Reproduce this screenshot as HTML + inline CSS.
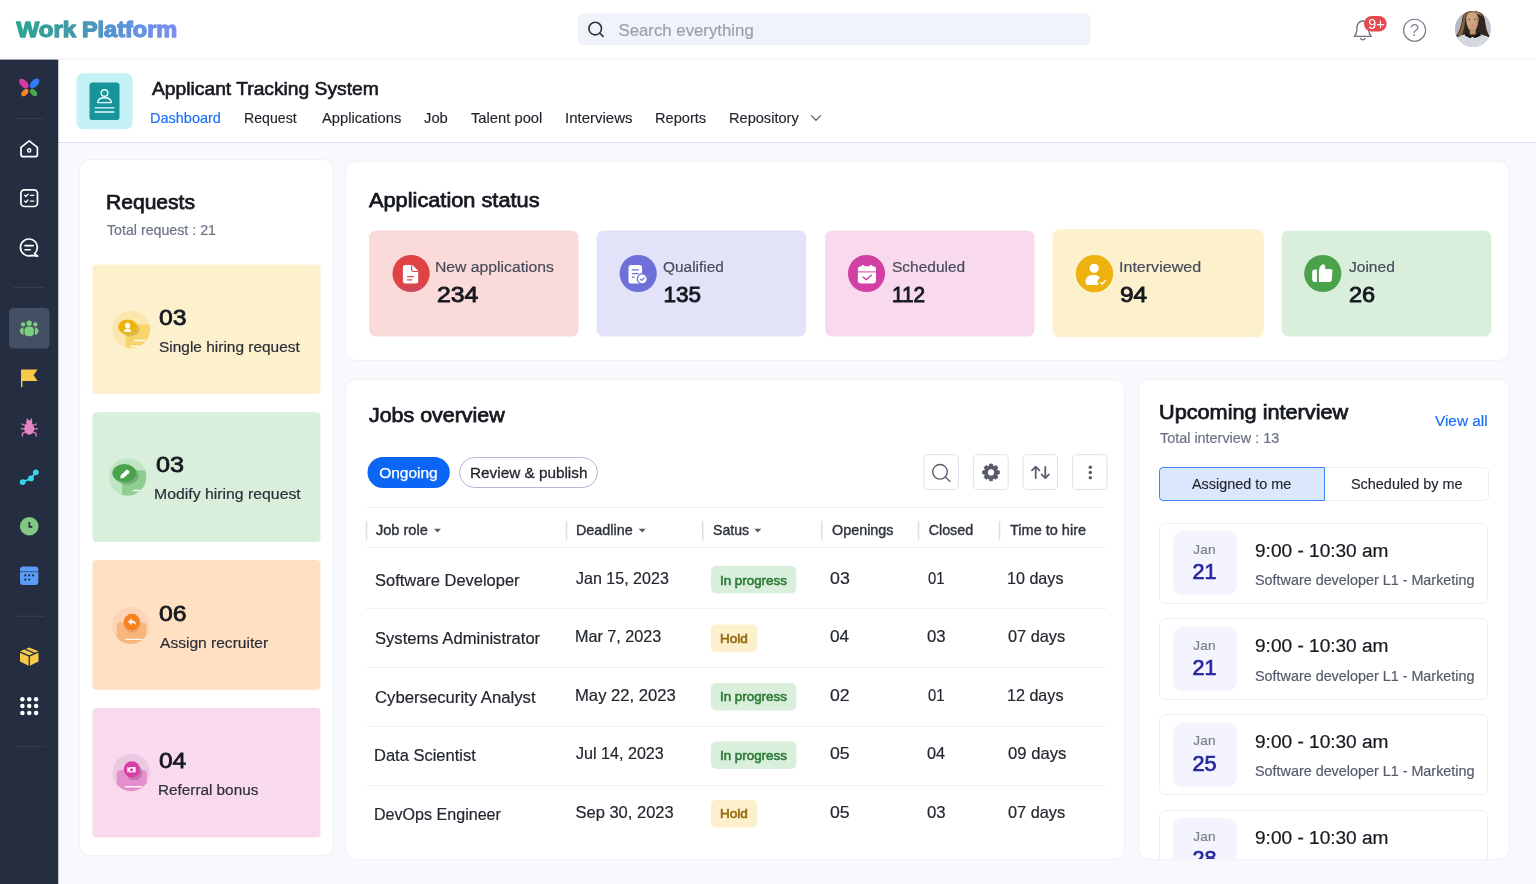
<!DOCTYPE html>
<html lang="en">
<head>
<meta charset="utf-8">
<title>Applicant Tracking System</title>
<style>
*{box-sizing:border-box;margin:0;padding:0}
html,body{width:1536px;height:884px;overflow:hidden}
body{font-family:"Liberation Sans",sans-serif;background:#f8f9fd;color:#15181f;position:relative}
.t{position:absolute;white-space:nowrap;line-height:1;z-index:5;transform-origin:0 50%}
#topbar{position:absolute;left:0;top:0;width:1536px;height:60px;background:#fff}
#side{position:absolute;left:0;top:60px;width:58px;height:824px;background:#252d40}
#apphead{position:absolute;left:58px;top:59px;width:1478px;height:84px;background:#fff;border-bottom:1px solid #d5dff2}
.card{position:absolute;background:#fff;border-radius:10px;box-shadow:0 0 0 1px #f1f2f7}
.hl{position:absolute;height:1px;background:#f1f2f7}
.ic{position:absolute;left:20.2px;width:329.3px;height:81.3px;border:1px solid #eff0f6;border-radius:6px;background:#fff}
.db{position:absolute;left:13.3px;top:7.5px;width:64px;height:64px;border-radius:9px;background:#f3f4fd;text-align:center;padding-right:1.8px}
.db i{display:block;font-style:normal;font-size:13.6px;color:#7a8090;line-height:1;padding-top:11.8px;letter-spacing:.2px;-webkit-text-stroke:.2px #7a8090}
.db b{display:block;font-weight:400;-webkit-text-stroke:.7px #24279b;font-size:21.6px;color:#24279b;line-height:1;padding-top:4.6px;transform:scaleX(1.0)}
#tl{position:absolute;left:0;top:0;width:1536px;height:884px;z-index:5;will-change:transform}
svg{position:absolute;left:0;top:0;overflow:visible;will-change:transform}
.gs{will-change:transform}
</style>
</head>
<body>
<div id="topbar"></div>
<div id="side"></div>
<div id="apphead"></div>

<!-- Requests card -->
<div class="card" style="left:80px;top:160px;width:253px;height:695px"></div>

<!-- Application status card -->
<div class="card" style="left:346px;top:162px;width:1163px;height:197.5px"></div>

<!-- Jobs overview card -->
<div class="card" style="left:346px;top:380px;width:777.5px;height:479px"></div>
<div class="hl" style="left:364.5px;top:507px;width:739px"></div>
<div class="hl" style="left:364.5px;top:547px;width:742px"></div>
<div class="hl" style="left:364.5px;top:608px;width:742px"></div>
<div class="hl" style="left:364.5px;top:666.6px;width:742px"></div>
<div class="hl" style="left:364.5px;top:725.6px;width:742px"></div>
<div class="hl" style="left:364.5px;top:785px;width:742px"></div>

<!-- Upcoming interview card -->
<div class="card gs" style="left:1139px;top:380px;width:370px;height:479px;overflow:hidden">
  <div style="position:absolute;left:185px;top:87px;width:164.5px;height:34px;border:1px solid #eceef5;border-left:none;border-radius:0 5px 5px 0"></div>
  <div style="position:absolute;left:20px;top:87px;width:165.5px;height:34px;border:1px solid #3f86f7;border-radius:4px 0 0 4px;background:#dbe7fc"></div>
  <div class="ic" style="top:142.75px"><div class="db"><i>Jan</i><b>21</b></div></div>
  <div class="ic" style="top:238.4px"><div class="db"><i>Jan</i><b>21</b></div></div>
  <div class="ic" style="top:334.1px"><div class="db"><i>Jan</i><b>25</b></div></div>
  <div class="ic" style="top:429.75px"><div class="db"><i>Jan</i><b>28</b></div></div>
</div>

<!-- icon layer (page coordinates) -->
<svg width="1536" height="884" viewBox="0 0 1536 884" style="z-index:4">
<defs>
  <linearGradient id="bg" x1="16" y1="0" x2="178" y2="0" gradientUnits="userSpaceOnUse">
    <stop offset="0" stop-color="#2aa590"/><stop offset=".38" stop-color="#4598ad"/><stop offset=".62" stop-color="#5594d6"/><stop offset="1" stop-color="#7e8df2"/>
  </linearGradient>
  <linearGradient id="rg" x1="0" y1="254.9" x2="0" y2="292.1" gradientUnits="userSpaceOnUse"><stop offset="0" stop-color="#e04343"/><stop offset=".74" stop-color="#e04343"/><stop offset=".9" stop-color="#d0495a"/><stop offset="1" stop-color="#c94c5c"/></linearGradient>
  <clipPath id="c1"><circle cx="131.2" cy="329.5" r="18.7"/></clipPath>
  <clipPath id="c2"><circle cx="127.6" cy="476.9" r="18.7"/></clipPath>
  <clipPath id="c3"><circle cx="130.75" cy="625.5" r="18.5"/></clipPath>
  <clipPath id="c4"><circle cx="131.2" cy="772.6" r="18.6"/></clipPath>
  <clipPath id="av"><circle cx="1473" cy="29" r="18"/></clipPath>
</defs>

<!-- colored cards (antialiased at half-pixel edges like the reference) -->
<g>
  <rect x="0" y="58.4" width="1536" height="1.3" fill="#f1f3f8"/>
  <rect x="0" y="59.6" width="58.25" height="825" fill="#252d40"/>
  <rect x="578" y="13.5" width="512.6" height="31.5" rx="4.5" fill="#f0f3f9"/>
  <rect x="92.5" y="264.5" width="228" height="129.5" rx="4" fill="#fdf0cd"/>
  <rect x="92.5" y="412.3" width="228" height="129.6" rx="4" fill="#d9efdb"/>
  <rect x="92.5" y="560" width="228" height="129.7" rx="4" fill="#ffe0c2"/>
  <rect x="92.5" y="708" width="228" height="129.5" rx="4" fill="#f8d9ee"/>
  <rect x="369" y="230.5" width="209.5" height="106" rx="7" fill="#fadbda"/>
  <rect x="596.6" y="230.5" width="209.6" height="106" rx="7" fill="#e2e2f8"/>
  <rect x="825" y="230.5" width="209.5" height="106" rx="7" fill="#f8d9ee"/>
  <rect x="1052.5" y="229.3" width="211.2" height="108" rx="7.5" fill="#fdf0cd"/>
  <rect x="1281.6" y="230.5" width="209.6" height="106" rx="7" fill="#d9efdb"/>
  <rect x="711" y="566" width="85.3" height="27.5" rx="5" fill="#d9efdb"/>
  <rect x="711" y="624.5" width="46.3" height="27.5" rx="5" fill="#fdf0cd"/>
  <rect x="711" y="683" width="85.3" height="27.5" rx="5" fill="#d9efdb"/>
  <rect x="711" y="741.5" width="85.3" height="27.5" rx="5" fill="#d9efdb"/>
  <rect x="711" y="800" width="46.3" height="27.5" rx="5" fill="#fdf0cd"/>
</g>

<!-- brand -->
<g font-family="Liberation Sans, sans-serif" font-weight="700" font-size="21.9" fill="url(#bg)" stroke="url(#bg)" stroke-width="1.3" stroke-linejoin="round">
  <text x="16.6" y="36.7" textLength="59.6" lengthAdjust="spacingAndGlyphs">Work</text>
  <text x="81.9" y="36.7" textLength="95.4" lengthAdjust="spacingAndGlyphs">Platform</text>
</g>

<!-- top search icon -->
<g fill="none" stroke="#2b303b" stroke-width="1.6" stroke-linecap="round">
  <circle cx="595.2" cy="28.6" r="6.3"/><path d="M599.9 33.3 L603 36.4"/>
</g>
<!-- bell -->
<g fill="none" stroke="#6a7283" stroke-width="1.3" stroke-linecap="round" stroke-linejoin="round">
  <path d="M1354.4 36.3 H1371.2 C1369.6 34.6 1368.7 32.6 1368.7 30 V27.6 C1368.7 24 1366.2 21 1362.8 21 C1359.4 21 1356.9 24 1356.9 27.6 V30 C1356.9 32.6 1356 34.6 1354.4 36.3 Z"/>
  <path d="M1360.6 38.3 a2.3 2.3 0 0 0 4.4 0"/>
</g>
<rect x="1364" y="16" width="22.6" height="15.6" rx="7.8" fill="#e5484d"/>
<text x="1368.2" y="28.6" font-family="Liberation Sans, sans-serif" font-size="14.2" fill="#fff" textLength="16.4" lengthAdjust="spacingAndGlyphs">9+</text>
<!-- help -->
<circle cx="1414.6" cy="30.2" r="11" fill="none" stroke="#737a88" stroke-width="1.15"/>
<text x="1414.6" y="36.3" font-family="Liberation Sans, sans-serif" font-size="17" fill="#838a97" text-anchor="middle">?</text>
<!-- avatar -->
<g clip-path="url(#av)">
  <rect x="1455" y="11" width="36" height="36" fill="#c3c5cf"/>
  <rect x="1455" y="11" width="12" height="26" fill="#aeb0ba" opacity=".6"/>
  <path d="M1473 10.4 C1466.4 10.4 1463 14 1462.2 18.6 C1461.4 24.6 1460.6 30 1455.6 36.6 L1467 37.4 L1479 37.4 L1490 37.2 C1486.4 31.6 1485.8 26 1485 20.4 C1484.2 14.4 1479.8 10.4 1473 10.4 Z" fill="#33261f"/>
  <path d="M1472 10.6 C1466.6 10.8 1463.6 14.2 1463 18.6 C1462.2 24.6 1461.4 29.6 1457 35.6 L1461.6 36 C1464 31 1464.6 25 1465.2 19.4 C1465.6 15 1468 12 1472 10.6 Z" fill="#86633f"/>
  <path d="M1466.4 15 C1467.8 12.2 1470.4 11 1473.6 11 C1477.6 11 1480.8 12.8 1482.4 16.4 C1479.2 14.2 1476 13.6 1472.6 13.6 C1470 13.6 1468 14 1466.4 15 Z" fill="#a27f57"/>
  <path d="M1466.3 17.4 C1466.7 14.2 1469.4 12.8 1472.3 12.8 C1475.7 12.8 1478.3 14.6 1478.5 18.6 C1478.7 23.2 1477.5 27.4 1475.3 30.2 C1473.9 32 1471.5 32 1470.1 30.4 C1467.3 27.4 1465.8 22.2 1466.3 17.4 Z" fill="#cda681"/>
  <path d="M1476 14.6 C1478 15.6 1478.7 17.4 1478.5 19.6 C1478.4 23.2 1477.5 27.4 1475.3 30.2 C1476.4 26 1477 20 1476 14.6 Z" fill="#a98363" opacity=".7"/>
  <rect x="1469.8" y="28.8" width="5.8" height="5.6" fill="#bf9873"/>
  <circle cx="1469.3" cy="19.5" r=".8" fill="#4b4a55"/><circle cx="1475" cy="19.5" r=".8" fill="#4b4a55"/>
  <path d="M1470.9 25.2 Q1472.3 26.3 1473.8 25.2 Q1472.4 24.5 1470.9 25.2 Z" fill="#e2455f"/>
  <path d="M1455 47 V38.6 C1461 35.4 1465 34.2 1468 33.8 L1472.8 37.4 L1477.6 33.8 C1481 34.2 1486 35.6 1491 38.6 V47 Z" fill="#d6d8e0"/>
  <path d="M1466 32 L1472.7 36.8 L1479.6 32 L1481 35.4 L1474.8 38.2 L1472.7 36.2 L1470.4 38.2 L1464.8 35.4 Z" fill="#15151a"/>
</g>

<!-- app icon -->
<rect x="76.5" y="73.2" width="56" height="56" rx="7" fill="#c3f1f5"/>
<rect x="89.5" y="82.5" width="30" height="37.6" rx="3.2" fill="#17959b"/>
<g fill="none" stroke="#eafcfd" stroke-width="1.4" stroke-linecap="round" stroke-linejoin="round">
  <circle cx="104.5" cy="93" r="3.3"/>
  <path d="M97.6 102.6 C98 99.2 100.6 97.8 104.5 97.8 C108.4 97.8 111 99.2 111.4 102.6 Z"/>
  <path d="M95.2 107.9 H113.8 M95.2 112 H113.8"/>
</g>
<!-- nav chevron -->
<path d="M811.5 115.6 L816 120.4 L820.5 115.6" fill="none" stroke="#5a6070" stroke-width="1.3" stroke-linecap="round" stroke-linejoin="round"/>

<!-- ===== sidebar ===== -->
<g>
  <ellipse cx="23.9" cy="83.6" rx="5.9" ry="3.4" transform="rotate(46 23.9 83.6)" fill="#d63aa9"/>
  <ellipse cx="34.6" cy="83.4" rx="5.9" ry="3.4" transform="rotate(-46 34.6 83.4)" fill="#2f7af5"/>
  <ellipse cx="24.8" cy="92.6" rx="4.3" ry="2.6" transform="rotate(-46 24.8 92.6)" fill="#f08a24"/>
  <ellipse cx="33.6" cy="92.6" rx="4.3" ry="2.6" transform="rotate(46 33.6 92.6)" fill="#4ca84e"/>
</g>
<g stroke="#3a4358" stroke-width="1">
  <path d="M14 118.5 H45" stroke="#333c50"/>
  <path d="M13.5 287.7 H44.5"/>
  <path d="M14 616.2 H45"/>
  <path d="M14 746.5 H45" stroke="#333c50"/>
</g>
<g fill="none" stroke="#fff" stroke-width="1.7" stroke-linecap="round" stroke-linejoin="round">
  <!-- home -->
  <path d="M21 147.4 L29.2 140.8 L37.4 147.4 V154.4 a2.3 2.3 0 0 1 -2.3 2.3 H23.3 a2.3 2.3 0 0 1 -2.3 -2.3 Z"/>
  <circle cx="29.2" cy="150.4" r="1.6" stroke-width="1.4"/>
  <!-- checklist -->
  <rect x="20.9" y="189.9" width="16.6" height="16.6" rx="3.6"/>
  <g stroke-width="1.3"><path d="M24.7 195.3 l1.2 1.2 l2.2 -2.4 M30.4 195.3 H33.8 M24.7 201.1 l1.2 1.2 l2.2 -2.4 M30.4 201.1 H33.8"/></g>
  <!-- chat -->
  <path d="M34.6 253.6 A8.4 8.4 0 1 0 31.6 255.4 L37.6 256.2 Z"/>
  <g stroke-width="1.6"><path d="M25 245.6 H33.2 M25 249.7 H30.2"/></g>
</g>
<rect x="9" y="308" width="40.5" height="40.5" rx="4.5" fill="#454f63"/>
<!-- people -->
<g fill="#7ccf7c">
  <circle cx="29.2" cy="323.2" r="2.65"/><rect x="24.5" y="326.5" width="9.4" height="9.8" rx="3.8"/>
  <circle cx="23.1" cy="324.4" r="2.15"/><path d="M23.5 327.4 V335 C21.4 334.6 19.9 333 19.9 330.6 C19.9 328.6 21.4 327.3 23.5 327.4 Z"/>
  <circle cx="35.3" cy="324.4" r="2.15"/><path d="M34.9 327.4 V335 C37 334.6 38.5 333 38.5 330.6 C38.5 328.6 37 327.3 34.9 327.4 Z"/>
</g>
<!-- flag -->
<path d="M21 369.4 H37.6 L33.6 375.2 L37.6 381 H22.4 V387 H21 Z" fill="#f7c948"/>
<!-- bug -->
<g fill="#e884c3" stroke="#e884c3" stroke-width="1.25" stroke-linecap="round" stroke-linejoin="round">
  <ellipse cx="29.25" cy="428.6" rx="5" ry="6.2" stroke="none"/>
  <ellipse cx="29.25" cy="422.4" rx="3" ry="2.4" stroke="none"/>
  <path d="M27.2 421 V418.8 M31.3 421 V418.8 M24.6 425.2 L22 424 M33.9 425.2 L36.5 424 M24.4 428.8 H21.3 M34.1 428.8 H37.2 M24.8 432.2 L22.4 433.4 V436 M33.7 432.2 L36.1 433.4 V436" fill="none"/>
</g>
<!-- nodes -->
<g fill="#36d6ea"><path d="M22.6 482 L31 478.4 L35.8 472.3" fill="none" stroke="#36d6ea" stroke-width="1.8"/>
  <circle cx="22.7" cy="482.1" r="2.9"/><circle cx="31" cy="478.4" r="2.9"/><circle cx="35.8" cy="472.3" r="2.9"/></g>
<!-- clock -->
<circle cx="29.25" cy="526.25" r="9.3" fill="#83c785"/>
<path d="M29.4 522 V526.9 H32.4" fill="none" stroke="#252d40" stroke-width="1.7"/>
<!-- calendar -->
<rect x="20" y="566.6" width="18.3" height="18.4" rx="3" fill="#5b9cf8"/>
<path d="M20 571.7 H38.3" stroke="#252d40" stroke-width=".9" stroke-dasharray="1.2 .6"/>
<g fill="#252d40"><circle cx="25.3" cy="575.4" r="1.15"/><circle cx="29.2" cy="575.4" r="1.15"/><circle cx="33.1" cy="575.4" r="1.15"/><circle cx="25.3" cy="579.6" r="1.15"/><circle cx="29.2" cy="579.6" r="1.15"/></g>
<!-- box -->
<g fill="#f7c948">
  <path d="M29.25 647.4 L38.5 651.2 L29.25 655.2 L20 651.2 Z"/>
  <path d="M20 652.8 L28.6 656.5 V665.8 L20 661.6 Z"/>
  <path d="M38.5 652.8 L29.9 656.5 V665.8 L38.5 661.6 Z"/>
  <path d="M24.2 649.4 L33.6 653.4 L35 652.8 L25.6 648.8 Z" fill="#252d40"/>
</g>
<!-- grid -->
<g fill="#fff">
  <circle cx="22.4" cy="699.2" r="2.25"/><circle cx="29.25" cy="699.2" r="2.25"/><circle cx="36.1" cy="699.2" r="2.25"/>
  <circle cx="22.4" cy="706.1" r="2.25"/><circle cx="29.25" cy="706.1" r="2.25"/><circle cx="36.1" cy="706.1" r="2.25"/>
  <circle cx="22.4" cy="713" r="2.25"/><circle cx="29.25" cy="713" r="2.25"/><circle cx="36.1" cy="713" r="2.25"/>
</g>

<!-- ===== request icons ===== -->
<circle cx="131.2" cy="329.5" r="18.7" fill="#fbe7ab"/>
<g clip-path="url(#c1)">
  <rect x="125.6" y="324.5" width="30" height="30" fill="#f7d56c"/>
  <path d="M134.4 340.6 H145.6 M130.3 346.2 H139.7" stroke="#fffaf0" stroke-width="1.5"/>
  <ellipse cx="129.9" cy="329.2" rx="9.6" ry="7.3" fill="#b08a20" opacity=".35"/>
</g>
<ellipse cx="127.6" cy="326.9" rx="9.6" ry="7.3" fill="#edb30f"/>
<circle cx="127.6" cy="325.4" r="2.6" fill="#fff"/>
<path d="M124 332 c.2-2.4 1.6-3.5 3.6-3.5 s3.4 1.1 3.6 3.5 Z" fill="#fff"/>

<circle cx="127.6" cy="476.9" r="18.7" fill="#c1e4c2"/>
<g clip-path="url(#c2)">
  <rect x="121.9" y="470.3" width="30" height="30" fill="#8fce90"/>
  <path d="M132.8 490.5 H140.4" stroke="#f4fbf4" stroke-width="1.4"/>
  <ellipse cx="126.8" cy="475.6" rx="11.9" ry="9" fill="#2d6e30" opacity=".3"/>
</g>
<ellipse cx="124.3" cy="473.1" rx="11.9" ry="9" fill="#49a34a"/>
<path d="M120.2 478.5 L120.9 475.2 L125.9 470.2 a1.7 1.7 0 0 1 2.4 0 l.6 .6 a1.7 1.7 0 0 1 0 2.4 L123.6 477.9 Z" fill="#fff"/>

<circle cx="130.75" cy="625.5" r="18.5" fill="#fcd5b8"/>
<g clip-path="url(#c3)">
  <rect x="116.8" y="622.6" width="29.7" height="26" rx="3.5" fill="#f8b57c"/>
  <path d="M125 639.4 H143.2" stroke="#fff6ee" stroke-width="1.3"/>
  <circle cx="132" cy="624.6" r="8.2" fill="#d9772a" opacity=".28"/>
</g>
<circle cx="131.9" cy="622" r="8.2" fill="#f5821f"/>
<path d="M127.9 621.7 L131.7 618.1 V620.3 C134.7 620.5 136.1 622.6 136.2 625.6 C135 623.8 133.7 623.1 131.7 623.1 V625.2 Z" fill="#fdf3ee"/>

<circle cx="131.2" cy="772.6" r="18.6" fill="#ebc8e2"/>
<g clip-path="url(#c4)">
  <rect x="116.8" y="770.2" width="30" height="26" rx="3.5" fill="#e48fcb"/>
  <path d="M125 786.7 H142.6" stroke="#fff2fa" stroke-width="1.4"/>
  <circle cx="134.2" cy="772.2" r="8.1" fill="#8a3a78" opacity=".35"/>
</g>
<circle cx="131.9" cy="769.35" r="8.1" fill="#d93da6"/>
<rect x="127.2" y="767" width="8.5" height="5.4" fill="#fbeaf6"/>
<circle cx="131.5" cy="769.7" r="1.5" fill="#d93da6"/>
<path d="M128.4 767 v1 M128.4 771.4 v1" stroke="#d93da6" stroke-width=".8"/>

<!-- ===== status icons ===== -->
<circle cx="411.1" cy="273.5" r="18.6" fill="url(#rg)"/>
<path d="M405.4 265 H412.4 L418.2 270.8 V281.1 a2.5 2.5 0 0 1 -2.5 2.5 H405.4 a2.5 2.5 0 0 1 -2.5 -2.5 V267.5 a2.5 2.5 0 0 1 2.5 -2.5 Z" fill="#fff"/>
<path d="M411.6 265.3 V269.6 a1.9 1.9 0 0 0 1.9 1.9 H418" fill="none" stroke="#e04343" stroke-width="1.2"/>
<path d="M407.1 276.6 H413.8 M407.1 279.9 H412" stroke="#e04343" stroke-width="1.4"/>

<circle cx="638.2" cy="273.5" r="18.6" fill="#6e6fd8"/>
<rect x="628.5" y="265" width="13.6" height="18.6" rx="2.7" fill="#fff"/>
<path d="M631.8 269.8 H638.8 M631.8 273.6 H638.8 M631.8 277.2 H634.6" stroke="#6e6fd8" stroke-width="1.3"/>
<circle cx="642.3" cy="278.9" r="5.6" fill="#6e6fd8"/><circle cx="642.3" cy="278.9" r="4.3" fill="#fff"/>
<path d="M640.2 279 l1.5 1.4 l2.8 -2.8" fill="none" stroke="#6e6fd8" stroke-width="1.2"/>

<circle cx="866.5" cy="273.5" r="18.6" fill="#d340a4"/>
<rect x="857.9" y="266.2" width="18.1" height="17.4" rx="3.3" fill="#fff"/>
<rect x="861.6" y="264.9" width="2.6" height="3.2" rx=".8" fill="#fff"/><rect x="869.7" y="264.9" width="2.6" height="3.2" rx=".8" fill="#fff"/>
<path d="M857.9 271.9 H876" stroke="#d340a4" stroke-width="1"/>
<path d="M863.1 277 L866.2 279.7 L871.2 275.2" fill="none" stroke="#d340a4" stroke-width="1.5" stroke-linecap="round" stroke-linejoin="round"/>

<circle cx="1094.5" cy="273.6" r="18.7" fill="#edb20f"/>
<circle cx="1094.2" cy="268.3" r="4.6" fill="#fff"/>
<path d="M1087.8 285 a2.2 2.2 0 0 1 -2.2 -2.2 V281.4 a6.4 6.4 0 0 1 6.4 -6.4 H1094.6 a6.4 6.4 0 0 1 6.4 6.4 V285 Z" fill="#fff"/>
<circle cx="1102.7" cy="282.1" r="5.2" fill="#edb20f"/>
<path d="M1100.2 282.2 l1.9 1.8 l3.6 -3.7" fill="none" stroke="#fff" stroke-width="1.4"/>

<circle cx="1322.8" cy="273.5" r="18.6" fill="#4aa34b"/>
<path d="M1316.9 269.5 V282.1 H1315 a2.8 2.8 0 0 1 -2.8 -2.8 V272.3 a2.8 2.8 0 0 1 2.8 -2.8 Z" fill="#fff"/>
<path d="M1318.9 270.6 C1319 268.4 1320.3 265.4 1322.6 264.2 C1324.6 263.9 1325.7 265.6 1325.2 268.9 H1330 a2.5 2.5 0 0 1 2.5 2.7 L1331.8 279.5 a2.8 2.8 0 0 1 -2.8 2.6 H1318.9 Z" fill="#fff"/>

<rect x="367.5" y="457" width="82.3" height="31" rx="15.5" fill="#0b66f6"/>
<rect x="459.5" y="457.5" width="138" height="30" rx="15" fill="#fff" stroke="#b3b8d2" stroke-width="1"/>
<!-- ===== jobs toolbar icons ===== -->
<g fill="#fff" stroke="#dde1ef" stroke-width="1">
  <rect x="923.9" y="454.7" width="34.6" height="34.8" rx="4.2"/><rect x="973.6" y="454.7" width="34.6" height="34.8" rx="4.2"/>
  <rect x="1023.1" y="454.7" width="34.4" height="34.8" rx="4.2"/><rect x="1072.6" y="454.7" width="34.5" height="34.8" rx="4.2"/>
</g>
<g fill="none" stroke="#595e6a" stroke-width="1.35" stroke-linecap="round">
  <circle cx="940" cy="471.8" r="7.3"/><path d="M945.3 477.1 L950 481.4"/>
</g>
<g fill="#575c68" transform="translate(991 472.4)">
  <g id="tooth"><path d="M-2.3 -5.2 L-1.4 -8.4 H1.4 L2.3 -5.2 Z" stroke="#575c68" stroke-width=".8" stroke-linejoin="round"/></g>
  <use href="#tooth" transform="rotate(45)"/><use href="#tooth" transform="rotate(90)"/><use href="#tooth" transform="rotate(135)"/>
  <use href="#tooth" transform="rotate(180)"/><use href="#tooth" transform="rotate(225)"/><use href="#tooth" transform="rotate(270)"/><use href="#tooth" transform="rotate(315)"/>
  <circle r="6.5"/><circle r="3.1" fill="#fff"/>
</g>
<g fill="none" stroke="#595e6a" stroke-width="1.8" stroke-linecap="round" stroke-linejoin="round">
  <path d="M1035.7 478 V466.8 M1032 470.4 L1035.7 466.7 L1039.4 470.4"/>
  <path d="M1045.3 466.8 V478 M1041.6 474.4 L1045.3 478.1 L1049 474.4"/>
</g>
<g fill="#595e6a"><circle cx="1090.3" cy="467.2" r="1.7"/><circle cx="1090.3" cy="472.5" r="1.7"/><circle cx="1090.3" cy="477.8" r="1.7"/></g>
<g stroke="#dcdfe9" stroke-width="1.5"><path d="M366.5 521 V540.5 M566.5 521 V540.5 M702.75 521 V540.5 M821.75 521 V540.5 M918.5 521 V540.5 M999.5 521 V540.5"/></g>
<!-- header carets -->
<g fill="#565c69"><path d="M434 528.7 H441 L437.5 532.5 Z"/><path d="M638.6 528.7 H645.8 L642.2 532.5 Z"/><path d="M754.2 528.7 H761.4 L757.8 532.5 Z"/></g>
</svg>

<!-- text layer -->
<div id="tl">
<span class="t" id="t0" style="left:618.47px;top:23.08px;font-size:16.8px;color:#9aa1b0;-webkit-text-stroke:0.2px #9aa1b0;">Search everything</span>
<span class="t" id="t1" style="left:151.89px;top:79.84px;font-size:18.5px;color:#15181f;-webkit-text-stroke:0.6px #15181f;transform:scaleX(1.0404);">Applicant Tracking System</span>
<span class="t" id="t2" style="left:149.60px;top:110.81px;font-size:14.4px;color:#1a6ff5;-webkit-text-stroke:0.15px #1a6ff5;transform:scaleX(1.0074);">Dashboard</span>
<span class="t" id="t3" style="left:243.68px;top:110.81px;font-size:14.4px;color:#1f232b;-webkit-text-stroke:0.15px #1f232b;transform:scaleX(0.9828);">Request</span>
<span class="t" id="t4" style="left:321.51px;top:110.81px;font-size:14.4px;color:#1f232b;-webkit-text-stroke:0.15px #1f232b;transform:scaleX(1.0212);">Applications</span>
<span class="t" id="t5" style="left:424.03px;top:110.81px;font-size:14.4px;color:#1f232b;-webkit-text-stroke:0.15px #1f232b;transform:scaleX(1.0277);">Job</span>
<span class="t" id="t6" style="left:471.31px;top:110.81px;font-size:14.4px;color:#1f232b;-webkit-text-stroke:0.15px #1f232b;transform:scaleX(1.0243);">Talent pool</span>
<span class="t" id="t7" style="left:565.18px;top:110.81px;font-size:14.4px;color:#1f232b;-webkit-text-stroke:0.15px #1f232b;transform:scaleX(1.0430);">Interviews</span>
<span class="t" id="t8" style="left:654.58px;top:110.81px;font-size:14.4px;color:#1f232b;-webkit-text-stroke:0.15px #1f232b;transform:scaleX(1.0146);">Reports</span>
<span class="t" id="t9" style="left:728.58px;top:110.81px;font-size:14.4px;color:#1f232b;-webkit-text-stroke:0.15px #1f232b;transform:scaleX(1.0134);">Repository</span>
<span class="t" id="t10" style="left:106.39px;top:192.37px;font-size:20px;color:#15181f;-webkit-text-stroke:0.75px #15181f;transform:scaleX(1.0535);">Requests</span>
<span class="t" id="t11" style="left:106.81px;top:222.56px;font-size:14.1px;color:#6b7385;-webkit-text-stroke:0.2px #6b7385;transform:scaleX(1.0075);">Total request : 21</span>
<span class="t" id="t12" style="left:159.15px;top:305.70px;font-size:22.8px;color:#15181f;-webkit-text-stroke:0.8px #15181f;transform:scaleX(1.0871);">03</span>
<span class="t" id="t13" style="left:158.84px;top:339.13px;font-size:15.2px;color:#2a2e38;-webkit-text-stroke:0.2px #2a2e38;transform:scaleX(1.0170);">Single hiring request</span>
<span class="t" id="t14" style="left:156.12px;top:452.70px;font-size:22.8px;color:#15181f;-webkit-text-stroke:0.8px #15181f;transform:scaleX(1.1070);">03</span>
<span class="t" id="t15" style="left:154.42px;top:485.63px;font-size:15.2px;color:#2a2e38;-webkit-text-stroke:0.2px #2a2e38;transform:scaleX(1.0410);">Modify hiring request</span>
<span class="t" id="t16" style="left:159.15px;top:602.20px;font-size:22.8px;color:#15181f;-webkit-text-stroke:0.8px #15181f;transform:scaleX(1.0874);">06</span>
<span class="t" id="t17" style="left:159.52px;top:635.13px;font-size:15.2px;color:#2a2e38;-webkit-text-stroke:0.2px #2a2e38;transform:scaleX(1.0246);">Assign recruiter</span>
<span class="t" id="t18" style="left:159.16px;top:748.70px;font-size:22.8px;color:#15181f;-webkit-text-stroke:0.8px #15181f;transform:scaleX(1.0727);">04</span>
<span class="t" id="t19" style="left:158.49px;top:782.13px;font-size:15.2px;color:#2a2e38;-webkit-text-stroke:0.2px #2a2e38;transform:scaleX(1.0066);">Referral bonus</span>
<span class="t" id="t20" style="left:368.60px;top:189.77px;font-size:20px;color:#15181f;-webkit-text-stroke:0.75px #15181f;transform:scaleX(1.0879);">Application status</span>
<span class="t" id="t21" style="left:435.42px;top:258.63px;font-size:15.2px;color:#464c5a;-webkit-text-stroke:0.2px #464c5a;transform:scaleX(1.0350);">New applications</span>
<span class="t" id="t22" style="left:436.66px;top:284.45px;font-size:22.5px;color:#15181f;-webkit-text-stroke:0.9px #15181f;transform:scaleX(1.1025);">234</span>
<span class="t" id="t23" style="left:663.28px;top:258.63px;font-size:15.2px;color:#464c5a;-webkit-text-stroke:0.2px #464c5a;transform:scaleX(1.0147);">Qualified</span>
<span class="t" id="t24" style="left:663.51px;top:284.45px;font-size:22.5px;color:#15181f;-webkit-text-stroke:0.9px #15181f;">135</span>
<span class="t" id="t25" style="left:891.84px;top:258.63px;font-size:15.2px;color:#464c5a;-webkit-text-stroke:0.2px #464c5a;transform:scaleX(1.0204);">Scheduled</span>
<span class="t" id="t26" style="left:892.21px;top:284.45px;font-size:22.5px;color:#15181f;-webkit-text-stroke:0.9px #15181f;transform:scaleX(0.9255);">112</span>
<span class="t" id="t27" style="left:1119.01px;top:258.63px;font-size:15.2px;color:#464c5a;-webkit-text-stroke:0.2px #464c5a;transform:scaleX(1.0570);">Interviewed</span>
<span class="t" id="t28" style="left:1119.74px;top:284.45px;font-size:22.5px;color:#15181f;-webkit-text-stroke:0.9px #15181f;transform:scaleX(1.0820);">94</span>
<span class="t" id="t29" style="left:1349.09px;top:258.63px;font-size:15.2px;color:#464c5a;-webkit-text-stroke:0.2px #464c5a;transform:scaleX(1.0230);">Joined</span>
<span class="t" id="t30" style="left:1348.75px;top:284.45px;font-size:22.5px;color:#15181f;-webkit-text-stroke:0.9px #15181f;transform:scaleX(1.0450);">26</span>
<span class="t" id="t31" style="left:369.39px;top:404.57px;font-size:20px;color:#15181f;-webkit-text-stroke:0.75px #15181f;transform:scaleX(1.0710);">Jobs overview</span>
<span class="t" id="t32" style="left:379.14px;top:465.13px;font-size:15.5px;color:#ffffff;-webkit-text-stroke:0.25px #ffffff;">Ongoing</span>
<span class="t" id="t33" style="left:469.67px;top:465.13px;font-size:15.5px;color:#1f232b;-webkit-text-stroke:0.3px #1f232b;transform:scaleX(0.9878);">Review &amp; publish</span>
<span class="t" id="t34" style="left:376.38px;top:523.40px;font-size:14.3px;color:#30343f;-webkit-text-stroke:0.4px #30343f;transform:scaleX(1.0181);">Job role</span>
<span class="t" id="t35" style="left:575.75px;top:523.40px;font-size:14.3px;color:#30343f;-webkit-text-stroke:0.4px #30343f;transform:scaleX(1.0031);">Deadline</span>
<span class="t" id="t36" style="left:712.59px;top:523.40px;font-size:14.3px;color:#30343f;-webkit-text-stroke:0.4px #30343f;transform:scaleX(0.9846);">Satus</span>
<span class="t" id="t37" style="left:831.55px;top:523.40px;font-size:14.3px;color:#30343f;-webkit-text-stroke:0.4px #30343f;transform:scaleX(1.0044);">Openings</span>
<span class="t" id="t38" style="left:928.67px;top:523.40px;font-size:14.3px;color:#30343f;-webkit-text-stroke:0.4px #30343f;">Closed</span>
<span class="t" id="t39" style="left:1009.68px;top:523.40px;font-size:14.3px;color:#30343f;-webkit-text-stroke:0.4px #30343f;transform:scaleX(1.0148);">Time to hire</span>
<span class="t" id="t40" style="left:374.94px;top:572.45px;font-size:16.3px;color:#23272f;-webkit-text-stroke:0.2px #23272f;transform:scaleX(1.0109);">Software Developer</span>
<span class="t" id="t41" style="left:576.07px;top:570.38px;font-size:16.5px;color:#23272f;-webkit-text-stroke:0.2px #23272f;transform:scaleX(0.9728);">Jan 15, 2023</span>
<span class="t" id="t42" style="left:719.93px;top:574.18px;font-size:13.2px;color:#2f7a38;-webkit-text-stroke:0.6px #2f7a38;transform:scaleX(1.0129);">In progress</span>
<span class="t" id="t43" style="left:830.36px;top:570.18px;font-size:16.5px;color:#23272f;-webkit-text-stroke:0.2px #23272f;transform:scaleX(1.0769);">03</span>
<span class="t" id="t44" style="left:927.58px;top:570.18px;font-size:16.5px;color:#23272f;-webkit-text-stroke:0.2px #23272f;transform:scaleX(0.8973);">01</span>
<span class="t" id="t45" style="left:1007.46px;top:570.18px;font-size:16.5px;color:#23272f;-webkit-text-stroke:0.2px #23272f;transform:scaleX(0.9765);">10 days</span>
<span class="t" id="t46" style="left:374.96px;top:629.70px;font-size:16.3px;color:#23272f;-webkit-text-stroke:0.2px #23272f;transform:scaleX(1.0197);">Systems Administrator</span>
<span class="t" id="t47" style="left:575.25px;top:627.63px;font-size:16.5px;color:#23272f;-webkit-text-stroke:0.2px #23272f;transform:scaleX(0.9809);">Mar 7, 2023</span>
<span class="t" id="t48" style="left:720.15px;top:632.43px;font-size:13.2px;color:#946a10;-webkit-text-stroke:0.6px #946a10;transform:scaleX(1.0261);">Hold</span>
<span class="t" id="t49" style="left:830.40px;top:628.43px;font-size:16.5px;color:#23272f;-webkit-text-stroke:0.2px #23272f;transform:scaleX(1.0473);">04</span>
<span class="t" id="t50" style="left:927.44px;top:628.43px;font-size:16.5px;color:#23272f;-webkit-text-stroke:0.2px #23272f;transform:scaleX(1.0155);">03</span>
<span class="t" id="t51" style="left:1008.49px;top:628.43px;font-size:16.5px;color:#23272f;-webkit-text-stroke:0.2px #23272f;transform:scaleX(0.9896);">07 days</span>
<span class="t" id="t52" style="left:374.98px;top:689.20px;font-size:16.3px;color:#23272f;-webkit-text-stroke:0.2px #23272f;transform:scaleX(1.0259);">Cybersecurity Analyst</span>
<span class="t" id="t53" style="left:575.19px;top:687.13px;font-size:16.5px;color:#23272f;-webkit-text-stroke:0.2px #23272f;transform:scaleX(1.0090);">May 22, 2023</span>
<span class="t" id="t54" style="left:719.93px;top:689.93px;font-size:13.2px;color:#2f7a38;-webkit-text-stroke:0.6px #2f7a38;transform:scaleX(1.0129);">In progress</span>
<span class="t" id="t55" style="left:830.36px;top:686.93px;font-size:16.5px;color:#23272f;-webkit-text-stroke:0.2px #23272f;transform:scaleX(1.0682);">02</span>
<span class="t" id="t56" style="left:927.58px;top:686.93px;font-size:16.5px;color:#23272f;-webkit-text-stroke:0.2px #23272f;transform:scaleX(0.8973);">01</span>
<span class="t" id="t57" style="left:1007.46px;top:686.93px;font-size:16.5px;color:#23272f;-webkit-text-stroke:0.2px #23272f;transform:scaleX(0.9765);">12 days</span>
<span class="t" id="t58" style="left:374.25px;top:747.45px;font-size:16.3px;color:#23272f;-webkit-text-stroke:0.2px #23272f;transform:scaleX(1.0131);">Data Scientist</span>
<span class="t" id="t59" style="left:576.06px;top:745.38px;font-size:16.5px;color:#23272f;-webkit-text-stroke:0.2px #23272f;transform:scaleX(0.9765);">Jul 14, 2023</span>
<span class="t" id="t60" style="left:719.93px;top:749.18px;font-size:13.2px;color:#2f7a38;-webkit-text-stroke:0.6px #2f7a38;transform:scaleX(1.0129);">In progress</span>
<span class="t" id="t61" style="left:830.38px;top:745.18px;font-size:16.5px;color:#23272f;-webkit-text-stroke:0.2px #23272f;transform:scaleX(1.0721);">05</span>
<span class="t" id="t62" style="left:927.45px;top:745.18px;font-size:16.5px;color:#23272f;-webkit-text-stroke:0.2px #23272f;transform:scaleX(0.9893);">04</span>
<span class="t" id="t63" style="left:1008.46px;top:745.18px;font-size:16.5px;color:#23272f;-webkit-text-stroke:0.2px #23272f;transform:scaleX(1.0091);">09 days</span>
<span class="t" id="t64" style="left:374.31px;top:806.20px;font-size:16.3px;color:#23272f;-webkit-text-stroke:0.2px #23272f;transform:scaleX(0.9876);">DevOps Engineer</span>
<span class="t" id="t65" style="left:575.50px;top:804.13px;font-size:16.5px;color:#23272f;-webkit-text-stroke:0.2px #23272f;">Sep 30, 2023</span>
<span class="t" id="t66" style="left:720.15px;top:806.93px;font-size:13.2px;color:#946a10;-webkit-text-stroke:0.6px #946a10;transform:scaleX(1.0261);">Hold</span>
<span class="t" id="t67" style="left:830.38px;top:803.93px;font-size:16.5px;color:#23272f;-webkit-text-stroke:0.2px #23272f;transform:scaleX(1.0721);">05</span>
<span class="t" id="t68" style="left:927.44px;top:803.93px;font-size:16.5px;color:#23272f;-webkit-text-stroke:0.2px #23272f;transform:scaleX(1.0155);">03</span>
<span class="t" id="t69" style="left:1008.49px;top:803.93px;font-size:16.5px;color:#23272f;-webkit-text-stroke:0.2px #23272f;transform:scaleX(0.9896);">07 days</span>
<span class="t" id="t70" style="left:1159.15px;top:402.37px;font-size:20px;color:#15181f;-webkit-text-stroke:0.75px #15181f;transform:scaleX(1.0841);">Upcoming interview</span>
<span class="t" id="t71" style="left:1435.44px;top:412.88px;font-size:15.5px;color:#1a6ff5;-webkit-text-stroke:0.2px #1a6ff5;transform:scaleX(0.9898);">View all</span>
<span class="t" id="t72" style="left:1160.41px;top:430.76px;font-size:14.1px;color:#6b7385;-webkit-text-stroke:0.2px #6b7385;transform:scaleX(1.0214);">Total interview : 13</span>
<span class="t" id="t73" style="left:1192.12px;top:477.13px;font-size:14.5px;color:#1f232b;-webkit-text-stroke:0.15px #1f232b;transform:scaleX(0.9924);">Assigned to me</span>
<span class="t" id="t74" style="left:1351.04px;top:477.13px;font-size:14.5px;color:#1f232b;-webkit-text-stroke:0.15px #1f232b;transform:scaleX(0.9947);">Scheduled by me</span>
<span class="t" id="t75" style="left:1254.77px;top:542.09px;font-size:18.8px;color:#15181f;-webkit-text-stroke:0.2px #15181f;transform:scaleX(1.0147);">9:00 - 10:30 am</span>
<span class="t" id="t76" style="left:1254.97px;top:573.06px;font-size:14.4px;color:#555b6a;-webkit-text-stroke:0.2px #555b6a;transform:scaleX(0.9976);">Software developer L1 - Marketing</span>
<span class="t" id="t77" style="left:1254.77px;top:636.76px;font-size:18.8px;color:#15181f;-webkit-text-stroke:0.2px #15181f;transform:scaleX(1.0147);">9:00 - 10:30 am</span>
<span class="t" id="t78" style="left:1254.97px;top:668.73px;font-size:14.4px;color:#555b6a;-webkit-text-stroke:0.2px #555b6a;transform:scaleX(0.9976);">Software developer L1 - Marketing</span>
<span class="t" id="t79" style="left:1254.77px;top:733.43px;font-size:18.8px;color:#15181f;-webkit-text-stroke:0.2px #15181f;transform:scaleX(1.0147);">9:00 - 10:30 am</span>
<span class="t" id="t80" style="left:1254.97px;top:764.40px;font-size:14.4px;color:#555b6a;-webkit-text-stroke:0.2px #555b6a;transform:scaleX(0.9976);">Software developer L1 - Marketing</span>
<span class="t" id="t81" style="left:1254.77px;top:829.10px;font-size:18.8px;color:#15181f;-webkit-text-stroke:0.2px #15181f;transform:scaleX(1.0147);">9:00 - 10:30 am</span>
</div>
</body>
</html>
